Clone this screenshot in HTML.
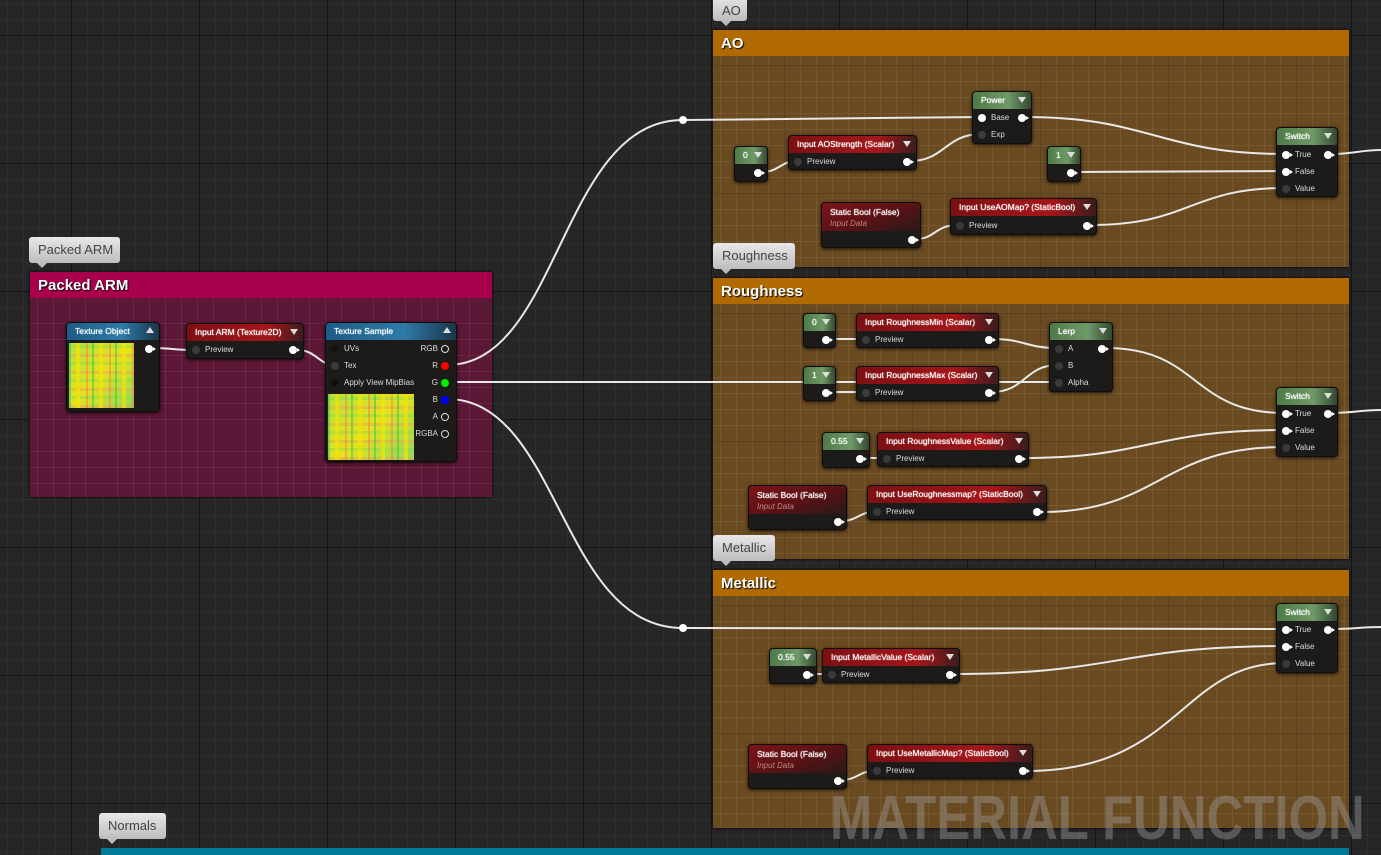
<!DOCTYPE html>
<html><head><meta charset="utf-8"><style>
*{margin:0;padding:0;box-sizing:border-box}
body{width:1381px;height:855px;overflow:hidden;position:relative;font-family:"Liberation Sans",sans-serif;
background-color:#262626;
background-image:linear-gradient(#161616 1px,transparent 1px),linear-gradient(90deg,#161616 1px,transparent 1px),linear-gradient(#2e2e2e 1px,transparent 1px),linear-gradient(90deg,#2e2e2e 1px,transparent 1px);
background-size:128px 128px,128px 128px,16px 16px,16px 16px;background-position:-40px 35px,-57px 35px,-40px 3px,-9px 3px}
.abs{position:absolute}
.cbody{position:absolute;background-color:#6a4a20;
background-image:linear-gradient(rgba(0,0,0,.25) 1px,transparent 1px),linear-gradient(90deg,rgba(0,0,0,.25) 1px,transparent 1px),linear-gradient(rgba(255,255,255,.07) 1px,transparent 1px),linear-gradient(90deg,rgba(255,255,255,.07) 1px,transparent 1px);
background-size:128px 128px,128px 128px,16px 16px,16px 16px;background-position:-40px 35px,-57px 35px,-40px 3px,-9px 3px;box-shadow:0 0 3px #000}
.chead{position:absolute;left:0;right:0;top:0;height:26px;background:#b06a00;color:#fff;font-weight:bold;font-size:15px;padding:5px 0 0 8px;text-shadow:1px 1px 1px #000}
.tag{position:absolute;background:linear-gradient(#e8e8e8,#bdbdbd);border-radius:3px;color:#444;font-size:13px;padding:5px 9px;height:26px;white-space:nowrap}
.tag:after{content:"";position:absolute;left:8px;bottom:-5px;border:5px solid transparent;border-top-color:#bdbdbd;border-bottom:0}
.node{position:absolute;background:#1d1b19;border-radius:4px;box-shadow:0 1px 3px rgba(0,0,0,.8);border:1px solid #0e0e0e;color:#ddd;font-size:8px}
.h{height:17px;border-radius:3px 3px 0 0;color:#fff;font-size:8.5px;padding:3px 0 0 8px;position:relative;white-space:nowrap;text-shadow:0 0 1px #fff}
.r{background:linear-gradient(90deg,#7c1012,#a5161a 70%,#3c1c1c)}
.g{background:linear-gradient(90deg,#4e7a48,#6f9a68 60%,#34482f)}
.b{background:linear-gradient(90deg,#1e5c86,#2d7aa8 60%,#1c3548)}
.h .a{position:absolute;right:5px;top:5px;border:4px solid transparent;border-top:6px solid #ddd;border-bottom:0}
.h .u{position:absolute;right:5px;top:4px;border:4px solid transparent;border-bottom:6px solid #ddd;border-top:0}
.sb{height:28px;border-radius:3px 3px 0 0;background:linear-gradient(160deg,#7c1418,#5c1216 50%,#2a1818);color:#fff;font-size:8.5px;padding:4px 0 0 8px;text-shadow:0 0 1px #fff}
.sb i{display:block;color:#c08a7a;font-weight:normal;font-size:8px;margin-top:2px;text-shadow:none}
.row{position:absolute;font-size:8px;color:#ddd;white-space:nowrap}
.p{position:absolute;width:8px;height:8px;border-radius:50%;background:#fff}
.p.o:after{content:"";position:absolute;left:8px;top:2px;border:2px solid transparent;border-left:3px solid #fff;border-right:0}
.p.d{background:#3a3a3a}
.tex{position:absolute;background:
repeating-linear-gradient(90deg,rgba(60,200,60,.55) 0 2px,transparent 2px 7px,rgba(240,230,0,.7) 7px 11px,transparent 11px 17px,rgba(230,120,60,.4) 17px 19px,transparent 19px 23px),
repeating-linear-gradient(0deg,rgba(230,160,90,.45) 0 3px,transparent 3px 9px,rgba(120,220,80,.4) 9px 12px,transparent 12px 17px),
linear-gradient(135deg,#b8e040,#e8e020 50%,#90d860);}
</style></head><body>

<div class="tag" style="left:29px;top:237px;width:91px">Packed ARM</div>
<div class="cbody" style="left:30px;top:272px;width:462px;height:225px;background-color:#5c1836">
<div class="chead" style="background:#a8004c">Packed ARM</div></div>

<div class="tag" style="left:713px;top:-5px;width:34px;padding-top:8px">AO</div>
<div class="cbody" style="left:713px;top:30px;width:636px;height:237px"><div class="chead">AO</div></div>
<div class="tag" style="left:713px;top:243px;width:82px">Roughness</div>
<div class="cbody" style="left:713px;top:278px;width:636px;height:281px"><div class="chead">Roughness</div></div>
<div class="tag" style="left:713px;top:535px;width:62px">Metallic</div>
<div class="cbody" style="left:713px;top:570px;width:636px;height:258px"><div class="chead">Metallic</div></div>
<div class="tag" style="left:99px;top:813px;width:67px">Normals</div>
<div class="abs" style="left:101px;top:848px;width:1248px;height:7px;background:#007a96"></div>

<div class="abs" style="left:830px;top:783px;font-weight:bold;font-size:62px;color:rgba(150,150,150,.45);white-space:nowrap;transform:scaleX(0.82);transform-origin:0 0">MATERIAL FUNCTION</div>

<svg class="abs" style="left:0;top:0" width="1381" height="855" fill="none" stroke="#e8e8e8" stroke-width="2">
<path d="M152 348 C170 348,175 350,195 350"/>
<path d="M298 350 C315 350,320 365,334 365"/>
<path d="M447 365 C560 365,560 120,683 120 L982 117"/>
<path d="M447 382 L1058 382"/>
<path d="M447 399 C560 399,560 628,683 628 L1285 629"/>
<path d="M1025 117 C1150 117,1160 154,1285 154"/>
<path d="M761 172 C780 172,780 161,797 161"/>
<path d="M910 161 C945 161,945 134,982 134"/>
<path d="M1075 172 L1285 171"/>
<path d="M916 239 C935 239,935 225,958 225"/>
<path d="M1091 225 C1190 225,1190 188,1285 188"/>
<path d="M1331 154 C1355 154,1360 150,1381 150"/>
<path d="M829 339 L865 339"/>
<path d="M992 339 C1025 339,1025 348,1058 348"/>
<path d="M829 392 L865 392"/>
<path d="M992 392 C1025 392,1025 365,1058 365"/>
<path d="M1106 348 C1200 348,1190 413,1285 413"/>
<path d="M864 458 L886 458"/>
<path d="M1022 458 C1150 458,1150 430,1285 430"/>
<path d="M841 521 C858 521,858 512,875 512"/>
<path d="M1041 512 C1160 512,1160 447,1285 447"/>
<path d="M1331 413 C1355 413,1360 410,1381 410"/>
<path d="M810 674 L830 674"/>
<path d="M953 674 C1120 674,1120 646,1285 646"/>
<path d="M841 780 C858 780,858 771,875 771"/>
<path d="M1026 771 C1180 771,1180 663,1285 663"/>
<path d="M1331 629 C1355 629,1360 627,1381 627"/>
<circle cx="683" cy="120" r="4" fill="#fff" stroke="none"/>
<circle cx="683" cy="628" r="4" fill="#fff" stroke="none"/>
</svg>

<div class="node" style="left:66px;top:322px;width:94px;height:90px"><div class="h b">Texture Object<span class="u"></span></div>
<div class="tex" style="left:2px;top:20px;width:65px;height:65px"></div><div class="p o" style="left:78px;top:22px"></div></div>
<div class="node" style="left:186px;top:323px;width:118px;height:36px"><div class="h r">Input ARM (Texture2D)<span class="a"></span></div>
<div class="p d" style="left:5px;top:22px"></div><div class="row" style="left:18px;top:21px">Preview</div><div class="p o" style="left:102px;top:22px"></div></div>
<div class="node" style="left:325px;top:322px;width:132px;height:140px"><div class="h b">Texture Sample<span class="u"></span></div>
<div class="p d" style="left:5px;top:22px;width:7px;height:7px;background:#111"></div><div class="row" style="left:18px;top:21px">UVs</div>
<div class="p d" style="left:5px;top:39px"></div><div class="row" style="left:18px;top:38px">Tex</div>
<div class="p d" style="left:5px;top:56px;width:7px;height:7px;background:#111"></div><div class="row" style="left:18px;top:55px">Apply View MipBias</div>
<div class="tex" style="left:2px;top:71px;width:86px;height:66px"></div>
<div class="row" style="right:18px;top:21px">RGB</div><div class="p" style="right:7px;top:22px;background:none;border:1.5px solid #ddd"></div>
<div class="row" style="right:18px;top:38px">R</div><div class="p" style="right:7px;top:39px;background:#f00"></div>
<div class="row" style="right:18px;top:55px">G</div><div class="p" style="right:7px;top:56px;background:#0e0"></div>
<div class="row" style="right:18px;top:72px">B</div><div class="p" style="right:7px;top:73px;background:#00f"></div>
<div class="row" style="right:18px;top:89px">A</div><div class="p" style="right:7px;top:90px;background:none;border:1.5px solid #ddd"></div>
<div class="row" style="right:18px;top:106px">RGBA</div><div class="p" style="right:7px;top:107px;background:none;border:1.5px solid #ddd"></div>
</div>

<div class="node" style="left:972px;top:91px;width:60px;height:53px"><div class="h g">Power<span class="a"></span></div>
<div class="p" style="left:5px;top:22px"></div><div class="row" style="left:18px;top:21px">Base</div><div class="p o" style="left:45px;top:22px"></div>
<div class="p d" style="left:5px;top:39px"></div><div class="row" style="left:18px;top:38px">Exp</div></div>
<div class="node" style="left:734px;top:146px;width:34px;height:36px"><div class="h g">0<span class="a"></span></div><div class="p o" style="left:19px;top:22px"></div></div>
<div class="node" style="left:788px;top:135px;width:129px;height:35px"><div class="h r">Input AOStrength (Scalar)<span class="a"></span></div>
<div class="p d" style="left:5px;top:22px"></div><div class="row" style="left:18px;top:21px">Preview</div><div class="p o" style="left:114px;top:22px"></div></div>
<div class="node" style="left:1047px;top:146px;width:34px;height:36px"><div class="h g">1<span class="a"></span></div><div class="p o" style="left:19px;top:22px"></div></div>
<div class="node" style="left:821px;top:202px;width:100px;height:46px"><div class="sb">Static Bool (False)<i>Input Data</i></div><div class="p o" style="left:86px;top:33px"></div></div>
<div class="node" style="left:950px;top:198px;width:147px;height:37px"><div class="h r">Input UseAOMap? (StaticBool)<span class="a"></span></div>
<div class="p d" style="left:5px;top:23px"></div><div class="row" style="left:18px;top:22px">Preview</div><div class="p o" style="left:132px;top:23px"></div></div>
<div class="node" style="left:1276px;top:127px;width:62px;height:70px"><div class="h g">Switch<span class="a"></span></div>
<div class="p o" style="left:5px;top:23px"></div><div class="row" style="left:18px;top:22px">True</div><div class="p o" style="left:47px;top:23px"></div>
<div class="p o" style="left:5px;top:40px"></div><div class="row" style="left:18px;top:39px">False</div>
<div class="p d" style="left:5px;top:57px"></div><div class="row" style="left:18px;top:56px">Value</div></div>

<div class="node" style="left:803px;top:313px;width:33px;height:35px"><div class="h g">0<span class="a"></span></div><div class="p o" style="left:18px;top:22px"></div></div>
<div class="node" style="left:856px;top:313px;width:143px;height:35px"><div class="h r">Input RoughnessMin (Scalar)<span class="a"></span></div>
<div class="p d" style="left:5px;top:22px"></div><div class="row" style="left:18px;top:21px">Preview</div><div class="p o" style="left:128px;top:22px"></div></div>
<div class="node" style="left:803px;top:366px;width:33px;height:35px"><div class="h g">1<span class="a"></span></div><div class="p o" style="left:18px;top:22px"></div></div>
<div class="node" style="left:856px;top:366px;width:143px;height:35px"><div class="h r">Input RoughnessMax (Scalar)<span class="a"></span></div>
<div class="p d" style="left:5px;top:22px"></div><div class="row" style="left:18px;top:21px">Preview</div><div class="p o" style="left:128px;top:22px"></div></div>
<div class="node" style="left:1049px;top:322px;width:64px;height:70px"><div class="h g">Lerp<span class="a"></span></div>
<div class="p d" style="left:5px;top:22px"></div><div class="row" style="left:18px;top:21px">A</div><div class="p o" style="left:48px;top:22px"></div>
<div class="p d" style="left:5px;top:39px"></div><div class="row" style="left:18px;top:38px">B</div>
<div class="p d" style="left:5px;top:56px"></div><div class="row" style="left:18px;top:55px">Alpha</div></div>
<div class="node" style="left:822px;top:432px;width:48px;height:36px"><div class="h g">0.55<span class="a"></span></div><div class="p o" style="left:33px;top:22px"></div></div>
<div class="node" style="left:877px;top:432px;width:152px;height:35px"><div class="h r">Input RoughnessValue (Scalar)<span class="a"></span></div>
<div class="p d" style="left:5px;top:22px"></div><div class="row" style="left:18px;top:21px">Preview</div><div class="p o" style="left:137px;top:22px"></div></div>
<div class="node" style="left:748px;top:485px;width:99px;height:45px"><div class="sb">Static Bool (False)<i>Input Data</i></div><div class="p o" style="left:85px;top:32px"></div></div>
<div class="node" style="left:867px;top:485px;width:180px;height:35px"><div class="h r">Input UseRoughnessmap? (StaticBool)<span class="a"></span></div>
<div class="p d" style="left:5px;top:22px"></div><div class="row" style="left:18px;top:21px">Preview</div><div class="p o" style="left:165px;top:22px"></div></div>
<div class="node" style="left:1276px;top:387px;width:62px;height:70px"><div class="h g">Switch<span class="a"></span></div>
<div class="p o" style="left:5px;top:22px"></div><div class="row" style="left:18px;top:21px">True</div><div class="p o" style="left:47px;top:22px"></div>
<div class="p o" style="left:5px;top:39px"></div><div class="row" style="left:18px;top:38px">False</div>
<div class="p d" style="left:5px;top:56px"></div><div class="row" style="left:18px;top:55px">Value</div></div>

<div class="node" style="left:769px;top:648px;width:48px;height:36px"><div class="h g">0.55<span class="a"></span></div><div class="p o" style="left:33px;top:22px"></div></div>
<div class="node" style="left:822px;top:648px;width:138px;height:35px"><div class="h r">Input MetallicValue (Scalar)<span class="a"></span></div>
<div class="p d" style="left:5px;top:22px"></div><div class="row" style="left:18px;top:21px">Preview</div><div class="p o" style="left:123px;top:22px"></div></div>
<div class="node" style="left:748px;top:744px;width:99px;height:45px"><div class="sb">Static Bool (False)<i>Input Data</i></div><div class="p o" style="left:85px;top:32px"></div></div>
<div class="node" style="left:867px;top:744px;width:166px;height:35px"><div class="h r">Input UseMetallicMap? (StaticBool)<span class="a"></span></div>
<div class="p d" style="left:5px;top:22px"></div><div class="row" style="left:18px;top:21px">Preview</div><div class="p o" style="left:151px;top:22px"></div></div>
<div class="node" style="left:1276px;top:603px;width:62px;height:70px"><div class="h g">Switch<span class="a"></span></div>
<div class="p o" style="left:5px;top:22px"></div><div class="row" style="left:18px;top:21px">True</div><div class="p o" style="left:47px;top:22px"></div>
<div class="p o" style="left:5px;top:39px"></div><div class="row" style="left:18px;top:38px">False</div>
<div class="p d" style="left:5px;top:56px"></div><div class="row" style="left:18px;top:55px">Value</div></div>

</body></html>
